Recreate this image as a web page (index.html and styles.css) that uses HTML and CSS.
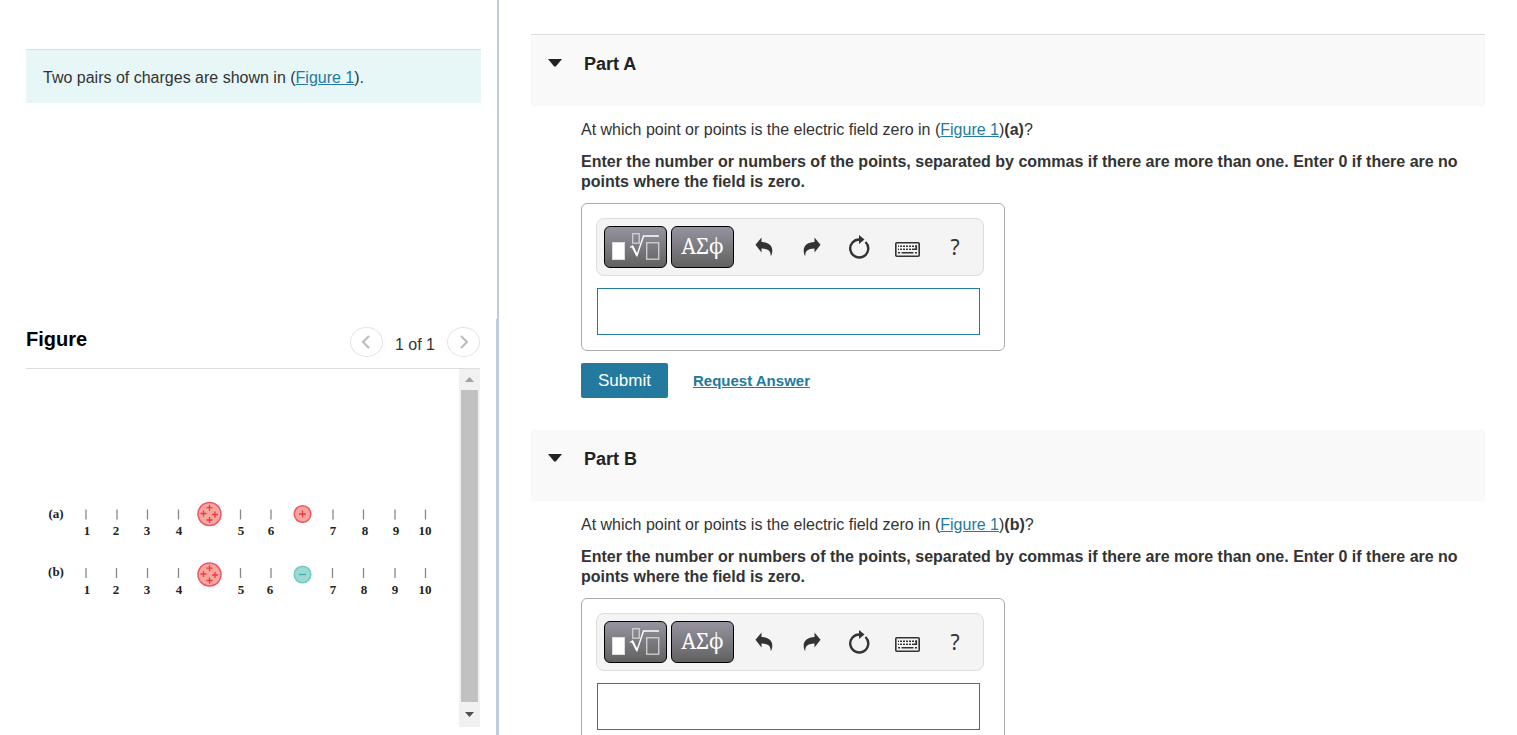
FILE: index.html
```html
<!DOCTYPE html>
<html lang="en">
<head>
<meta charset="utf-8">
<title>Electric field of charge pairs</title>
<link rel="stylesheet" href="styles.css">
</head>
<body>
<svg class="defs" aria-hidden="true">
  <symbol id="i-root" viewBox="0 0 48 28">
    <rect x="0.5" y="9.500" width="12" height="17" fill="#fff" stroke="#ddd"/>
    <rect x="20.700" y="0.700" width="6.500" height="9.500" fill="none" stroke="#ccc" stroke-width="1.400"/>
    <path d="M18 14.500l2.500-1.500 4.500 9.500 6.500-19.500H47" fill="none" stroke="#fff" stroke-width="1.400"/>
    <path d="M20.500 13.500l4.500 9" stroke="#fff" stroke-width="2"/>
    <rect x="34.700" y="9.700" width="12" height="16.500" fill="none" stroke="#ccc" stroke-width="1.400"/>
  </symbol>
  <symbol id="i-undo" viewBox="0 0 18 20">
    <path d="M0.500 7.800L6.500 0.500v4.500c6.500 .2 11 3.300 10.800 8.800 0 2.200-.7 4.300-1.600 5.500.3-4.500-1.700-7.500-9.200-7.700V15.500z" fill="#333"/>
  </symbol>
  <symbol id="i-redo" viewBox="0 0 18 20">
    <path d="M17.500 7.800L11.500 0.500v4.500c-6.500 .2-11 3.300-10.800 8.800 0 2.200.7 4.300 1.600 5.500-.3-4.500 1.700-7.500 9.200-7.700V15.500z" fill="#333"/>
  </symbol>
  <symbol id="i-reset" viewBox="0 0 22 24">
    <path d="M12 4.500A9 9 0 1 0 17.500 7" fill="none" stroke="#333" stroke-width="2.400"/>
    <path d="M11 0l5.500 4.500-5.500 4.500z" fill="#333"/>
  </symbol>
  <symbol id="i-keys" viewBox="0 0 25 15">
    <rect x="0.800" y="0.800" width="23.400" height="13.400" rx="1" fill="none" stroke="#333" stroke-width="1.600"/>
    <path d="M3 4.200h19M3 7.200h16M3 10.700h2M6.500 10.700h12M20 10.700h2" stroke="#333" stroke-width="1.600"/>
    <path d="M4.500 3v5.500M7.500 3v5.500M10.500 3v5.500M13.500 3v5.500M16.500 3v5.500M19.500 3v3M3 5.700h16" stroke="#f4f4f4" stroke-width="1"/>
    <path d="M19 7.200h2.300V3.500" fill="none" stroke="#333" stroke-width="1.600"/>
  </symbol>
  <symbol id="i-caret" viewBox="0 0 14 8">
    <path d="M0 0h14L7.800 7.500H6.200z" fill="#222"/>
  </symbol>
  <symbol id="c-four" viewBox="0 0 26 26">
    <circle cx="13" cy="13" r="11.500" fill="#f7a799" stroke="#f0556b" stroke-width="1.500"/>
    <path d="M13 3.700v6M10 6.700h6M7 9.500v6M4 12.500h6M18.500 10.500v6M15.500 13.500h6M13 16v6M10 19h6" stroke="#ee3558" stroke-width="1.300"/>
  </symbol>
</svg>
<div class="page">
  <aside class="side">
    <section class="intro">
      <p class="prompt">Two pairs of charges are shown in (<a href="#figure">Figure 1</a>).</p>
    </section>
    <section class="figure" id="figure">
      <header class="figure-head">
        <h2>Figure</h2>
        <nav class="pager">
          <button class="round" aria-label="Previous figure"><svg width="10" height="14" viewBox="0 0 10 14"><path d="M8 1L2 7l6 6" fill="none" stroke="#bbb" stroke-width="2"/></svg></button>
          <span>1 of 1</span>
          <button class="round" aria-label="Next figure"><svg width="10" height="14" viewBox="0 0 10 14"><path d="M2 1l6 6-6 6" fill="none" stroke="#bbb" stroke-width="2"/></svg></button>
        </nav>
      </header>
      <div class="viewer">
        <svg class="diagram" viewBox="26 369 433 358" role="img" aria-label="Two rows of numbered points with charges">
          <g stroke="#888" stroke-width="1.300">
            <path d="M86 509.500v10M117 509.500v10M147.500 509.500v10M178.500 509.500v10M240.500 509.500v10M271 509.500v10M333 509.500v10M363.500 509.500v10M395 509.500v10M425.500 509.500v10"/>
            <path d="M86 568v10M116.500 568v10M147.500 568v10M178.500 568v10M240.500 568v10M271 568v10M332.500 568v10M363.500 568v10M395 568v10M425.500 568v10"/>
          </g>
          <g class="labels">
            <text x="56" y="518">(a)</text>
            <text x="87" y="535">1</text><text x="116" y="535">2</text><text x="147" y="535">3</text><text x="179" y="535">4</text><text x="241" y="535">5</text><text x="271" y="535">6</text><text x="333" y="535">7</text><text x="365" y="535">8</text><text x="396" y="535">9</text><text x="425" y="535">10</text>
            <text x="56" y="576">(b)</text>
            <text x="87" y="594">1</text><text x="116" y="594">2</text><text x="147" y="594">3</text><text x="179" y="594">4</text><text x="241" y="594">5</text><text x="270" y="594">6</text><text x="333" y="594">7</text><text x="364" y="594">8</text><text x="395" y="594">9</text><text x="425" y="594">10</text>
          </g>
          <use href="#c-four" x="196.500" y="501" width="26" height="26"/>
          <use href="#c-four" x="196.500" y="561.500" width="26" height="26"/>
          <circle cx="302.500" cy="514" r="8.300" fill="#f7a799" stroke="#f0556b" stroke-width="1.500"/>
          <path d="M299 514h7M302.500 510.500v7" stroke="#ee3558" stroke-width="1.300"/>
          <circle cx="302.500" cy="574.500" r="8.300" fill="#9fd8d2" stroke="#6fcdc4" stroke-width="1.500"/>
          <path d="M299 574.500h7" stroke="#3ab3a8" stroke-width="1.300"/>
        </svg>
        <div class="scroll">
          <button class="step" aria-label="Scroll up"><svg width="9" height="5" viewBox="0 0 9 5"><path d="M0 5h9L4.500 0z" fill="#a3a3a3"/></svg></button>
          <div class="thumb"></div>
          <button class="step step-down" aria-label="Scroll down"><svg width="9" height="5" viewBox="0 0 9 5"><path d="M0 0h9L4.500 5z" fill="#505050"/></svg></button>
        </div>
      </div>
    </section>
  </aside>
  <main class="main">
    <section class="part">
      <h2 class="part-head part-first"><svg class="caret" width="14" height="8"><use href="#i-caret"/></svg>Part A</h2>
      <div class="part-body">
        <p>At which point or points is the electric field zero in (<a href="#figure">Figure 1</a>)<b>(a)</b>?</p>
        <p><b>Enter the number or numbers of the points, separated by commas if there are more than one. Enter 0 if there are no points where the field is zero.</b></p>
        <div class="editor">
          <div class="tools">
            <button class="dark" aria-label="Templates"><svg width="48" height="28"><use href="#i-root"/></svg></button>
            <button class="dark greek">ΑΣϕ</button>
            <button class="tool" aria-label="Undo"><svg width="18" height="20"><use href="#i-undo"/></svg></button>
            <button class="tool" aria-label="Redo"><svg width="18" height="20"><use href="#i-redo"/></svg></button>
            <button class="tool" aria-label="Reset"><svg width="22" height="24"><use href="#i-reset"/></svg></button>
            <button class="tool keys" aria-label="Keyboard shortcuts"><svg width="25" height="15"><use href="#i-keys"/></svg></button>
            <button class="tool">?</button>
          </div>
          <input class="answer" type="text" aria-label="Answer for Part A">
        </div>
        <div class="actions">
          <button class="submit">Submit</button>
          <a class="request" href="#answer-a">Request Answer</a>
        </div>
      </div>
    </section>
    <section class="part">
      <h2 class="part-head"><svg class="caret" width="14" height="8"><use href="#i-caret"/></svg>Part B</h2>
      <div class="part-body">
        <p>At which point or points is the electric field zero in (<a href="#figure">Figure 1</a>)<b>(b)</b>?</p>
        <p><b>Enter the number or numbers of the points, separated by commas if there are more than one. Enter 0 if there are no points where the field is zero.</b></p>
        <div class="editor">
          <div class="tools">
            <button class="dark" aria-label="Templates"><svg width="48" height="28"><use href="#i-root"/></svg></button>
            <button class="dark greek">ΑΣϕ</button>
            <button class="tool" aria-label="Undo"><svg width="18" height="20"><use href="#i-undo"/></svg></button>
            <button class="tool" aria-label="Redo"><svg width="18" height="20"><use href="#i-redo"/></svg></button>
            <button class="tool" aria-label="Reset"><svg width="22" height="24"><use href="#i-reset"/></svg></button>
            <button class="tool keys" aria-label="Keyboard shortcuts"><svg width="25" height="15"><use href="#i-keys"/></svg></button>
            <button class="tool">?</button>
          </div>
          <input class="answer" type="text" aria-label="Answer for Part B">
        </div>
      </div>
    </section>
  </main>
</div>
</body>
</html>
```

FILE: styles.css
```css
* { box-sizing: border-box; }
body {
  margin: 0;
  font: 16px/20px "Liberation Sans", Arial, sans-serif;
  color: #333;
  background: #fff;
}
button { font: inherit; color: inherit; border: 0; padding: 0; background: none; }
p, h2 { margin: 0; }
a { color: #237a9e; }
svg { display: block; }
.defs { display: none; }

.page {
  display: grid;
  grid-template-columns: 499fr 1018fr;
  height: 100vh;
  overflow: hidden;
}

.side { display: flex; flex-direction: column; min-height: 0; }
.intro {
  flex: 0 0 319px;
  padding: 49px 16px 0 26px;
  border-right: 2px solid #bccbde;
}
.prompt {
  padding: 18px 17px 15px;
  background: #e7f7f8;
  border-top: 1px solid #d8dfe0;
}
.figure {
  flex: 1;
  min-height: 0;
  display: flex;
  flex-direction: column;
  padding: 0 16px 8px 26px;
  border-right: 3px solid #bccbde;
}
.figure-head {
  display: flex;
  justify-content: space-between;
  height: 50px;
  padding-top: 8px;
  border-bottom: 1px solid #ddd;
}
.figure-head h2 { font-size: 20px; line-height: 24px; color: #000; }
.pager { display: flex; gap: 12px; }
.pager span { padding-top: 8px; }
.round {
  display: grid;
  place-items: center;
  width: 33px;
  height: 30px;
  border: 1px solid #e4e4e4;
  border-radius: 50%;
}
.viewer { flex: 1; min-height: 0; display: flex; }
.diagram { flex: 1; min-width: 0; height: 100%; }
.labels {
  font: bold 13px "Liberation Serif", "Times New Roman", serif;
  fill: #222;
  text-anchor: middle;
}
.scroll {
  flex: 0 0 21px;
  display: flex;
  flex-direction: column;
  background: #f1f1f1;
}
.step { display: grid; place-items: center; height: 21px; }
.step-down { height: 25px; }
.thumb { flex: 1; margin: 0 2px; background: #c1c1c1; }

.main { padding: 34px 32px 0; overflow: hidden; }
.part { margin-bottom: 32px; }
.part-head {
  display: flex;
  align-items: center;
  gap: 22px;
  padding: 19px 17px 32px;
  font-size: 18px;
  line-height: 20px;
  color: #222;
  background: #f9f9f9;
}
.caret { margin-bottom: 2px; }
.part-first { border-top: 1px solid #ddd; }
.part-body { padding: 14px 10px 0 50px; }
.part-body p { margin-bottom: 12px; }
.part-body p + p { margin-bottom: 11px; }
.editor {
  width: 424px;
  padding: 14px 20px 15px 14px;
  border: 1px solid #aaa;
  border-radius: 6px;
}
.tools {
  display: flex;
  align-items: center;
  height: 58px;
  padding: 0 4px 0 7px;
  background: #f4f4f4;
  border: 1px solid #ddd;
  border-radius: 8px;
}
.dark {
  display: grid;
  place-items: center;
  width: 63px;
  height: 42px;
  margin-right: 4px;
  font: 21px/24px "Noto Serif", "DejaVu Serif", "Liberation Serif", serif;
  color: #fff;
  background: linear-gradient(#96939f, #616161);
  border: 1px solid #000;
  border-radius: 6px;
}
.greek { margin-right: 6px; padding-bottom: 3px; }
.tool {
  flex: 1;
  display: grid;
  place-items: center;
  height: 42px;
  font: 21px/24px "Noto Sans", sans-serif;
}
.keys { padding-top: 4px; }
.answer {
  display: block;
  width: 383px;
  height: 47px;
  margin: 12px 0 0 1px;
  padding: 0 8px;
  font: inherit;
  background: #fff;
  border: 1px solid #237a9e;
}
.actions { display: flex; align-items: center; gap: 25px; margin-top: 12px; }
.submit {
  width: 87px;
  height: 35px;
  font-size: 17px;
  color: #fff;
  background: #237a9e;
  border-radius: 2px;
}
.request { font-size: 15px; font-weight: bold; }
```
